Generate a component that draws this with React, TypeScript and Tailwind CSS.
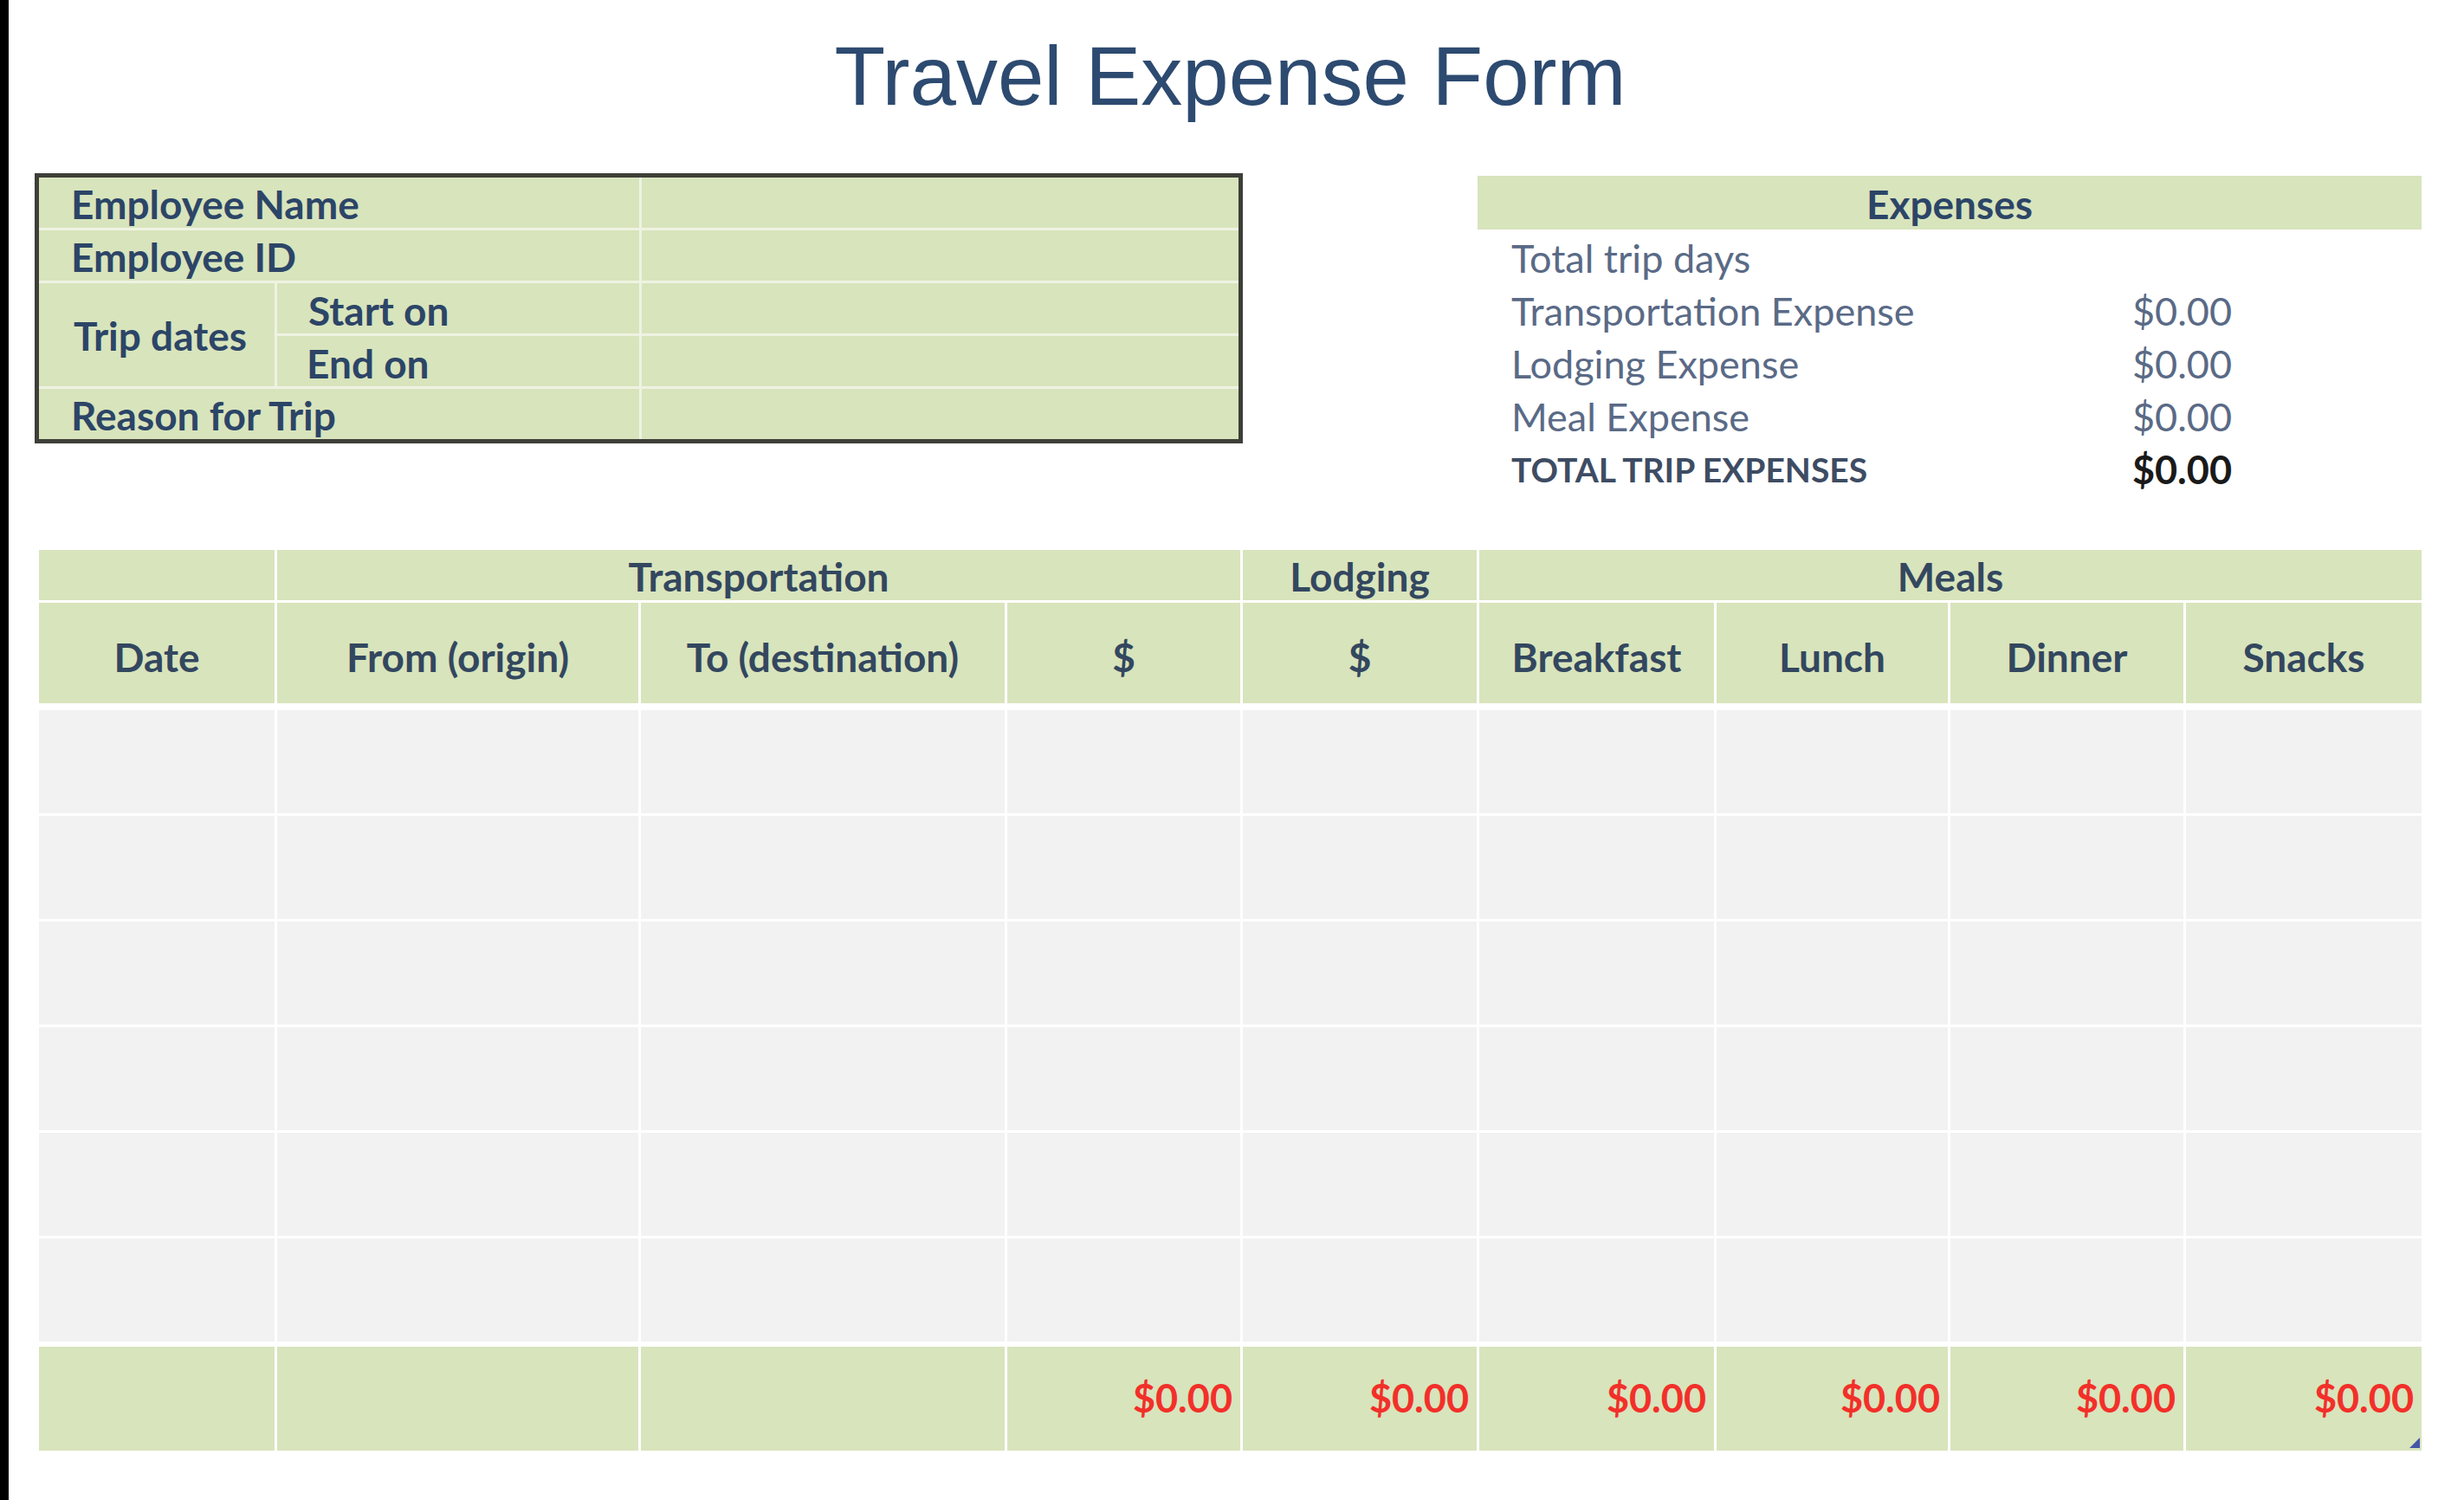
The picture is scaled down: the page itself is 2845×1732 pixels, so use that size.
const green = 'bg-[#d8e4bc]';

const headCols = ['Date', 'From (origin)', 'To (destination)', '$', '$', 'Breakfast', 'Lunch', 'Dinner', 'Snacks'];

const expenseRows = [
  { label: 'Total trip days', value: '' },
  { label: 'Transportation Expense', value: '$0.00' },
  { label: 'Lodging Expense', value: '$0.00' },
  { label: 'Meal Expense', value: '$0.00' },
];

function InfoBox() {
  return (
    <div className="-ml-[5px] w-[1395px] border-[5px] border-[#3d3f38] bg-[#eef3e2]">
      <div className="grid grid-cols-[272px_418px_1fr] grid-rows-[58px_58px_58px_58px_58px] gap-[3px] text-[46px] font-bold text-[#2c4567]">
        <div className={`col-span-2 flex items-center pt-[2px] pl-[37px] ${green}`}>Employee Name</div>
        <div className={green} />
        <div className={`col-span-2 flex items-center pt-[2px] pl-[37px] ${green}`}>Employee ID</div>
        <div className={green} />
        <div className={`row-span-2 flex items-center pt-[2px] pl-[40px] ${green}`}>Trip dates</div>
        <div className={`flex items-center pt-[4px] pl-[36px] ${green}`}>Start on</div>
        <div className={green} />
        <div className={`flex items-center pt-[4px] pl-[34px] ${green}`}>End on</div>
        <div className={green} />
        <div className={`col-span-2 flex items-center pt-[2px] pl-[37px] ${green}`}>Reason for Trip</div>
        <div className={green} />
      </div>
    </div>
  );
}

function ExpensesPanel() {
  return (
    <div className="mt-[3px] w-[1090px]">
      <div className={`flex h-[62px] items-center justify-center pt-[3px] text-[46px] font-bold text-[#2c4567] ${green}`}>
        Expenses
      </div>
      {expenseRows.map((r) => (
        <div key={r.label} className="flex h-[61px] items-center pt-[6px] pl-[39px] pr-[219px] text-[45px] text-[#5a6a86]">
          <span className="flex-1">{r.label}</span>
          <span>{r.value}</span>
        </div>
      ))}
      <div className="flex h-[61px] items-center pt-[6px] pl-[39px] pr-[219px]">
        <span className="flex-1 text-[39px] font-bold text-[#3e4c63]">TOTAL TRIP EXPENSES</span>
        <span className="text-[45px] font-bold text-[#1a1a1a]">$0.00</span>
      </div>
    </div>
  );
}

function ExpenseTable() {
  return (
    <div className="mt-[65px]">
      <div className="grid grid-cols-[272px_417px_420px_269px_270px_271px_267px_269px_272px] grid-rows-[58px_116px] gap-[3px] text-[46px] font-bold text-[#33475f]">
        <div className={green} />
        <div className={`col-span-3 flex items-center justify-center pt-[2px] ${green}`}>Transportation</div>
        <div className={`flex items-center justify-center pt-[2px] ${green}`}>Lodging</div>
        <div className={`col-span-4 flex items-center justify-center pt-[2px] ${green}`}>Meals</div>
        {headCols.map((c, i) => (
          <div key={i} className={`flex items-center justify-center pt-[8px] ${green}`}>
            {c}
          </div>
        ))}
      </div>

      <div className="mt-[8px] grid grid-cols-[272px_417px_420px_269px_270px_271px_267px_269px_272px] grid-rows-[119px_119px_119px_119px_119px_119px] gap-[3px]">
        {Array.from({ length: 54 }).map((_, i) => (
          <div key={i} className="bg-[#f2f2f2]" />
        ))}
      </div>

      <div className="mt-[6px] grid h-[120px] grid-cols-[272px_417px_420px_269px_270px_271px_267px_269px_272px] gap-[3px] text-[45px] font-bold text-[#f2302a]">
        <div className={green} />
        <div className={green} />
        <div className={green} />
        {Array.from({ length: 6 }).map((_, i) => (
          <div key={i} className={`relative flex items-center justify-end pr-[9px] ${green}`}>
            $0.00
            {i === 5 && (
              <svg className="absolute bottom-[3px] right-[2px] h-[13px] w-[13px]" viewBox="0 0 12 12">
                <polygon points="12,1 12,12 1,12" fill="#4356a6" />
              </svg>
            )}
          </div>
        ))}
      </div>
    </div>
  );
}

export default function App() {
  return (
    <div className="flex h-[1732px] w-[2845px] bg-white font-['Lato',sans-serif]">
      <div className="w-[10px] shrink-0 bg-black" />
      <div className="ml-[35px] w-[2751px]">
        <h1 className="pt-[39px] text-center font-['Liberation_Sans',Arial,sans-serif] text-[96px] leading-[97px] font-normal text-[#2d4a70]">
          Travel Expense Form
        </h1>
        <div className="mt-[64px] flex items-start justify-between">
          <InfoBox />
          <ExpensesPanel />
        </div>
        <ExpenseTable />
      </div>
    </div>
  );
}
